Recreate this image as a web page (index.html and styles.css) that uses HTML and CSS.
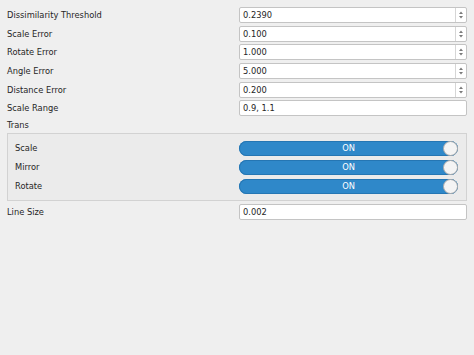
FILE: index.html
```html
<!DOCTYPE html>
<html lang="en">
<head>
  <meta charset="UTF-8" />
  <title>Match Settings</title>
  <link rel="stylesheet" href="styles.css">
</head>
<body>
  <div class="panel">
    <div class="row">
      <label>Dissimilarity Threshold</label>
      <div class="spin"><input type="text" value="0.2390" /><span class="arrows"><svg width="10" height="14" viewBox="0 0 10 14"><path d="M3 6 L5 3.5 L7 6 Z M3 8 L5 10.5 L7 8 Z" fill="#7a7a7a"/></svg></span></div>
    </div>
    <div class="row">
      <label>Scale Error</label>
      <div class="spin"><input type="text" value="0.100" /><span class="arrows"><svg width="10" height="14" viewBox="0 0 10 14"><path d="M3 6 L5 3.5 L7 6 Z M3 8 L5 10.5 L7 8 Z" fill="#7a7a7a"/></svg></span></div>
    </div>
    <div class="row">
      <label>Rotate Error</label>
      <div class="spin"><input type="text" value="1.000" /><span class="arrows"><svg width="10" height="14" viewBox="0 0 10 14"><path d="M3 6 L5 3.5 L7 6 Z M3 8 L5 10.5 L7 8 Z" fill="#7a7a7a"/></svg></span></div>
    </div>
    <div class="row">
      <label>Angle Error</label>
      <div class="spin"><input type="text" value="5.000" /><span class="arrows"><svg width="10" height="14" viewBox="0 0 10 14"><path d="M3 6 L5 3.5 L7 6 Z M3 8 L5 10.5 L7 8 Z" fill="#7a7a7a"/></svg></span></div>
    </div>
    <div class="row">
      <label>Distance Error</label>
      <div class="spin"><input type="text" value="0.200" /><span class="arrows"><svg width="10" height="14" viewBox="0 0 10 14"><path d="M3 6 L5 3.5 L7 6 Z M3 8 L5 10.5 L7 8 Z" fill="#7a7a7a"/></svg></span></div>
    </div>
    <div class="row">
      <label>Scale Range</label>
      <input class="text" type="text" value="0.9, 1.1" />
    </div>

    <div class="group-title">Trans</div>
    <div class="group">
      <div class="row sw-row">
        <label>Scale</label>
        <div class="switch"><span>ON</span><i class="knob"></i></div>
      </div>
      <div class="row sw-row">
        <label>Mirror</label>
        <div class="switch"><span>ON</span><i class="knob"></i></div>
      </div>
      <div class="row sw-row">
        <label>Rotate</label>
        <div class="switch"><span>ON</span><i class="knob"></i></div>
      </div>
    </div>

    <div class="row">
      <label>Line Size</label>
      <input class="text" type="text" value="0.002" />
    </div>
  </div>
</body>
</html>
```

FILE: styles.css
```css
body {
  margin: 0;
  background: #efefef;
  font-family: 'DejaVu Sans', sans-serif;
  font-size: 8.3px;
  color: #262626;
}

.panel {
  padding: 7px 7px 0 7px;
}

.row {
  display: grid;
  grid-template-columns: 232px 1fr;
  align-items: center;
  height: 16px;
  margin-bottom: 2.67px;
}

label {
  display: block;
}

input {
  font-family: 'DejaVu Sans', sans-serif;
  font-size: 8.3px;
  color: #262626;
  border: none;
  outline: none;
  background: transparent;
  padding: 0 3px;
  height: 100%;
  width: 100%;
  box-sizing: border-box;
}

.text {
  background: white;
  border: 1px solid #c4c4c4;
  border-radius: 2px;
}

.spin {
  display: flex;
  height: 16px;
  background: white;
  border: 1px solid #c4c4c4;
  border-radius: 2px;
  box-sizing: border-box;
}

.arrows {
  display: flex;
  width: 10px;
  flex: none;
  border-left: 1px solid #d6d6d6;
}

.group-title {
  height: 12px;
  line-height: 12px;
  margin: 0 0 2px 0;
}

.group {
  border: 1px solid #d2d2d2;
  background: #ebebeb;
  padding: 7px 8px 6px 7px;
  margin-bottom: 3px;
}

.sw-row {
  grid-template-columns: 224px 1fr;
  height: 15px;
  margin-bottom: 4px;
}

.sw-row:last-child {
  margin-bottom: 0;
}

.switch {
  position: relative;
  height: 15px;
  background: #2f88c9;
  border-radius: 8px;
  color: white;
  text-align: center;
  line-height: 15px;
  box-shadow: inset 0 0 0 1px #2576b3;
}

.knob {
  position: absolute;
  right: 0;
  top: 0;
  width: 15px;
  height: 15px;
  box-sizing: border-box;
  border-radius: 50%;
  background: #f4f4f4;
  border: 1.5px solid #a9a9a9;
}
```
